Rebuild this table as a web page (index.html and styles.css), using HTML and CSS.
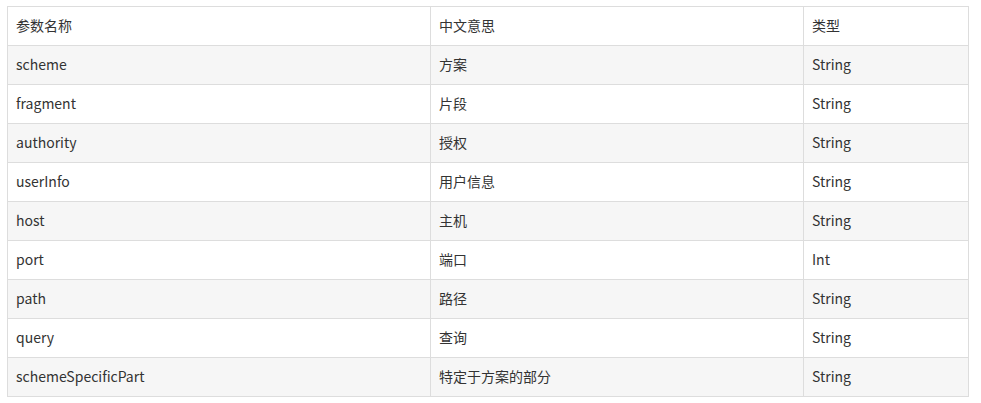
FILE: index.html
```html
<!DOCTYPE html>
<html lang="zh">
<head>
<meta charset="utf-8">
<link rel="stylesheet" href="styles.css">
</head>
<body>
<div class="wrap">
<table class="params">
<colgroup><col class="c1"><col class="c2"><col class="c3"></colgroup>
<thead>
<tr><th>参数名称</th><th>中文意思</th><th>类型</th></tr>
</thead>
<tbody>
<tr><td>scheme</td><td>方案</td><td>String</td></tr>
<tr><td>fragment</td><td>片段</td><td>String</td></tr>
<tr><td>authority</td><td>授权</td><td>String</td></tr>
<tr><td>userInfo</td><td>用户信息</td><td>String</td></tr>
<tr><td>host</td><td>主机</td><td>String</td></tr>
<tr><td>port</td><td>端口</td><td>Int</td></tr>
<tr><td>path</td><td>路径</td><td>String</td></tr>
<tr><td>query</td><td>查询</td><td>String</td></tr>
<tr><td>schemeSpecificPart</td><td>特定于方案的部分</td><td>String</td></tr>
</tbody>
</table>
</div>
</body>
</html>
```
FILE: styles.css
```css
html, body {
  margin: 0;
  background: #fff;
}
.wrap {
  padding: 6px 0 0 7px;
}
.params {
  border-collapse: collapse;
  table-layout: fixed;
  width: 961px;
  font-family: "Noto Sans CJK SC", sans-serif;
  font-size: 14px;
  color: #333;
}
.c1 { width: 423px; }
.c2 { width: 373px; }
.c3 { width: 165px; }
.params th,
.params td {
  border: 1px solid #ddd;
  padding: 7px 8px 9px;
  height: 22px;
  line-height: 22px;
  text-align: left;
  font-weight: normal;
  white-space: nowrap;
}
.params tbody tr:nth-child(odd) td {
  background: #f6f6f6;
}
```
